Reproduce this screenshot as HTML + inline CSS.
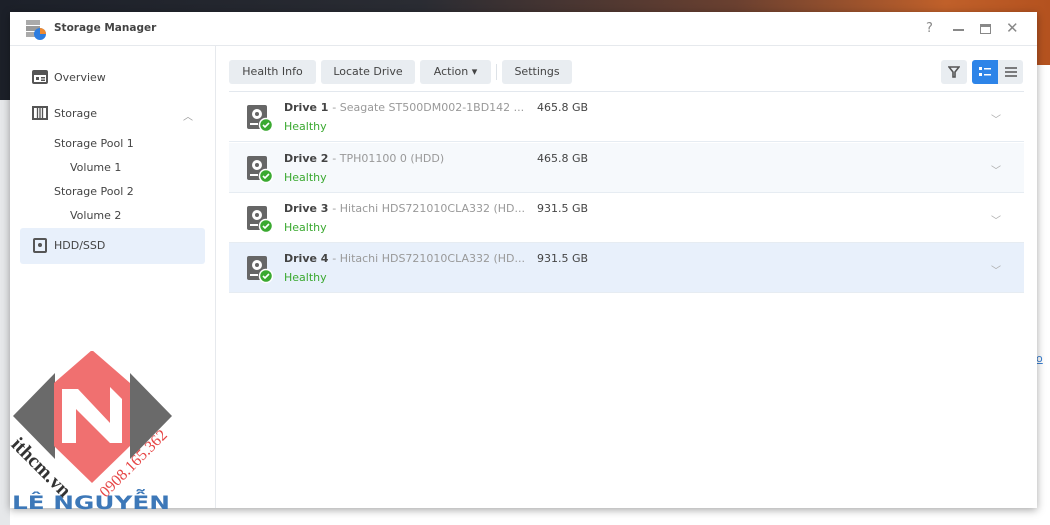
<!DOCTYPE html><html><head><style>
*{margin:0;padding:0;box-sizing:border-box}
body{width:1050px;height:525px;overflow:hidden;position:relative;font-family:"DejaVu Sans","Liberation Sans",sans-serif;font-size:11px;color:#333;background:#fff}
.bgtop{position:absolute;left:0;top:0;width:1050px;height:100px;background:linear-gradient(90deg,#1c2029 0%,#2a2c33 40%,#6a4030 70%,#c0602a 90%,#b4521f 100%)}
.bgl{position:absolute;left:0;top:100px;width:10px;height:425px;background:#e6e8ea}
.bgr{position:absolute;left:1037px;top:65px;width:13px;height:460px;background:#fff}
.win{position:absolute;left:10px;top:12px;width:1027px;height:496px;background:#fff;box-shadow:0 2px 8px rgba(0,0,0,.35)}
.title{position:absolute;left:0;top:0;width:100%;height:34px;border-bottom:1px solid #e6e9ed}
.title .t{position:absolute;left:44px;top:10px;font-weight:bold;font-size:10.5px;color:#444}
.side{position:absolute;left:0;top:34px;width:206px;height:462px;border-right:1px solid #e6e9ed}
.ni{position:absolute;font-size:11px;color:#444}
.sel{position:absolute;left:10px;top:182px;width:185px;height:36px;background:#e8f0fb;border-radius:3px}
.btn{position:absolute;top:48px;height:24px;background:#e9edf1;border-radius:3px;font-size:11px;color:#444;line-height:24px;text-align:center}
.row{position:absolute;left:219px;width:795px;height:50px;border-bottom:1px solid #e6ecf2}
.row .n{position:absolute;left:55px;top:9px;font-weight:bold;color:#444}
.row .n span{font-weight:normal;color:#999}
.row .s{position:absolute;left:308px;top:9px;color:#444}
.row .h{position:absolute;left:55px;top:28px;color:#3aa930}
.row .c{position:absolute;left:762px;top:19px;color:#aaa;font-size:10px}
.ic{position:absolute;left:18px;top:13px}
</style></head><body>
<div class="bgtop"></div><div class="bgl"></div><div class="bgr"></div>
<div style="position:absolute;left:1036px;top:352px;color:#3a7fd0;font-size:11px;text-decoration:underline">o</div>
<div class="win">
<div class="title">
<svg style="position:absolute;left:15px;top:7px" width="22" height="22"><rect x="1" y="1" width="14" height="5" fill="#aaa"/><rect x="1" y="7" width="14" height="5" fill="#999"/><rect x="1" y="13" width="14" height="5" fill="#aaa"/><circle cx="15" cy="15" r="6" fill="#2d7de0"/><path d="M15 15 L15 9 A6 6 0 0 1 21 15Z" fill="#f08a30"/></svg>
<div class="t">Storage Manager</div>
<div style="position:absolute;left:916px;top:9px;color:#888;font-size:13px">?</div>
<div style="position:absolute;left:943px;top:17px;width:11px;height:1.5px;background:#888"></div>
<div style="position:absolute;left:970px;top:12px;width:11px;height:10px;border:1.5px solid #888;border-top-width:3px"></div>
<div style="position:absolute;left:996px;top:7px;color:#888;font-size:15px">✕</div>
</div>
<div class="side">
<svg style="position:absolute;left:22px;top:24px" width="16" height="14"><rect x="1" y="1" width="14" height="12" rx="1" fill="none" stroke="#555" stroke-width="2"/><rect x="1" y="1" width="14" height="4" fill="#555"/><rect x="4" y="7" width="3" height="3" fill="#555"/><rect x="9" y="7" width="4" height="1.5" fill="#555"/><rect x="9" y="9.5" width="4" height="1.5" fill="#555"/></svg>
<div class="ni" style="left:44px;top:25px">Overview</div>
<svg style="position:absolute;left:22px;top:60px" width="16" height="14"><rect x="1" y="1" width="14" height="12" fill="none" stroke="#555" stroke-width="2"/><path d="M5.5 2v10M8 2v10M10.5 2v10" stroke="#555" stroke-width="1.3"/></svg>
<div class="ni" style="left:44px;top:61px">Storage</div>
<div style="position:absolute;left:173px;top:62px;color:#999;font-size:10px">︿</div>
<div class="ni" style="left:44px;top:91px">Storage Pool 1</div>
<div class="ni" style="left:60px;top:115px">Volume 1</div>
<div class="ni" style="left:44px;top:139px">Storage Pool 2</div>
<div class="ni" style="left:60px;top:163px">Volume 2</div>
<div class="sel" style="top:182px"></div>
<svg style="position:absolute;left:23px;top:192px" width="14" height="15"><rect x="1" y="1" width="12" height="13" rx="1" fill="none" stroke="#555" stroke-width="2"/><circle cx="7" cy="7" r="2" fill="#555"/></svg>
<div class="ni" style="left:44px;top:193px">HDD/SSD</div>
<svg style="position:absolute;left:0;top:305px" width="200" height="160">
<polygon points="3,65 45,22 45,108" fill="#6a6a6a"/><polygon points="162,65 120,22 120,108" fill="#6a6a6a"/>
<polygon points="82,-1 120,32 120,95 82,132 44,95 44,32" fill="#f07070"/>
<path d="M50 88 L50 45 L67 45 L67 60 L100 90 L110 90 L110 45 L95 45 L95 70 L62 40 L50 40 Z" fill="#fff" opacity="0"/>
<path d="M52 92 L52 38 L68 38 L100 72 L100 36 L112 48 L112 92 L100 92 L66 58 L66 92Z" fill="#fff"/>
<text x="2" y="110" font-family="Liberation Serif" font-size="20" font-weight="bold" fill="#333" transform="rotate(45 20 100)">ithcm.vn</text>
<text x="92" y="142" font-family="Liberation Serif" font-size="16" fill="#e64545" transform="rotate(-45 100 140)">0908.165.362</text>
<text x="2" y="158" font-family="DejaVu Sans" font-size="19" font-weight="bold" fill="#3d78b8" textLength="158" lengthAdjust="spacingAndGlyphs">LÊ NGUYỄN</text>
</svg>
</div>
<div class="btn" style="left:219px;width:87px">Health Info</div>
<div class="btn" style="left:311px;width:94px">Locate Drive</div>
<div class="btn" style="left:410px;width:71px">Action ▾</div>
<div style="position:absolute;left:486px;top:52px;width:1px;height:16px;background:#dde2e7"></div>
<div class="btn" style="left:492px;width:70px">Settings</div>
<div class="btn" style="left:931px;width:26px"><svg width="12" height="12" style="margin-top:6px"><path d="M1 1h10L7 6v5H5V6Z" fill="none" stroke="#555" stroke-width="1.6"/></svg></div>
<div class="btn" style="left:962px;width:26px;background:#2d84e8;border-radius:3px 0 0 3px"><svg width="12" height="10" style="margin-top:7px"><rect x="0" y="0" width="3" height="3" fill="#fff"/><rect x="0" y="6" width="3" height="3" fill="#fff"/><rect x="5" y="1" width="7" height="1.5" fill="#fff"/><rect x="5" y="7" width="7" height="1.5" fill="#fff"/></svg></div>
<div class="btn" style="left:988px;width:25px;border-radius:0 3px 3px 0"><svg width="12" height="10" style="margin-top:7px"><path d="M0 1h12M0 5h12M0 9h12" stroke="#555" stroke-width="1.6"/></svg></div>
<div style="position:absolute;left:219px;top:79px;width:795px;height:1px;background:#e3e8ee"></div>
<div class="row" style="top:80px"><svg class="ic" width="26" height="28"><rect x="0" y="0" width="20" height="24" rx="2" fill="#666"/><circle cx="10" cy="9" r="5" fill="#fff"/><circle cx="10" cy="9" r="2" fill="#666"/><rect x="3" y="18" width="8" height="2" fill="#fff"/><circle cx="19" cy="20" r="6.5" fill="#3aa930" stroke="#fff" stroke-width="1.5"/><path d="M16 20l2 2 4-4" stroke="#fff" stroke-width="1.6" fill="none"/></svg><div class="n">Drive 1 <span>- Seagate ST500DM002-1BD142 ...</span></div><div class="s">465.8 GB</div><div class="h">Healthy</div><div class="c">﹀</div></div>
<div class="row" style="top:131px;background:#f6f9fc"><svg class="ic" width="26" height="28"><rect x="0" y="0" width="20" height="24" rx="2" fill="#666"/><circle cx="10" cy="9" r="5" fill="#fff"/><circle cx="10" cy="9" r="2" fill="#666"/><rect x="3" y="18" width="8" height="2" fill="#fff"/><circle cx="19" cy="20" r="6.5" fill="#3aa930" stroke="#fff" stroke-width="1.5"/><path d="M16 20l2 2 4-4" stroke="#fff" stroke-width="1.6" fill="none"/></svg><div class="n">Drive 2 <span>- TPH01100 0 (HDD)</span></div><div class="s">465.8 GB</div><div class="h">Healthy</div><div class="c">﹀</div></div>
<div class="row" style="top:181px"><svg class="ic" width="26" height="28"><rect x="0" y="0" width="20" height="24" rx="2" fill="#666"/><circle cx="10" cy="9" r="5" fill="#fff"/><circle cx="10" cy="9" r="2" fill="#666"/><rect x="3" y="18" width="8" height="2" fill="#fff"/><circle cx="19" cy="20" r="6.5" fill="#3aa930" stroke="#fff" stroke-width="1.5"/><path d="M16 20l2 2 4-4" stroke="#fff" stroke-width="1.6" fill="none"/></svg><div class="n">Drive 3 <span>- Hitachi HDS721010CLA332 (HD...</span></div><div class="s">931.5 GB</div><div class="h">Healthy</div><div class="c">﹀</div></div>
<div class="row" style="top:231px;background:#e8f0fb"><svg class="ic" width="26" height="28"><rect x="0" y="0" width="20" height="24" rx="2" fill="#666"/><circle cx="10" cy="9" r="5" fill="#fff"/><circle cx="10" cy="9" r="2" fill="#666"/><rect x="3" y="18" width="8" height="2" fill="#fff"/><circle cx="19" cy="20" r="6.5" fill="#3aa930" stroke="#fff" stroke-width="1.5"/><path d="M16 20l2 2 4-4" stroke="#fff" stroke-width="1.6" fill="none"/></svg><div class="n">Drive 4 <span>- Hitachi HDS721010CLA332 (HD...</span></div><div class="s">931.5 GB</div><div class="h">Healthy</div><div class="c">﹀</div></div>
</div>
</body></html>
